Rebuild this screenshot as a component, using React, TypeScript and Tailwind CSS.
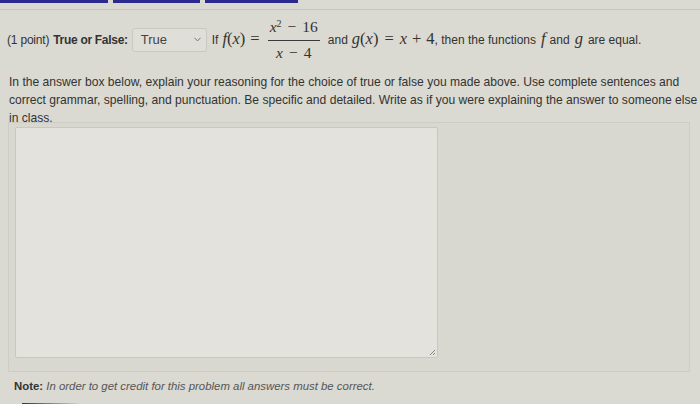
import { ChevronDown } from "lucide-react";

const serif = "font-['Liberation_Serif',serif]";

function Fraction() {
  return (
    <span className="mx-[3px] inline-flex flex-col items-center align-middle leading-none">
      <span className="px-[2px] pb-[5px] text-[15.5px]">
        <i>x</i>
        <sup className="text-[10px]">2</sup>
        <span className="mx-[6px]">−</span>16
      </span>
      <span className="h-px w-full bg-[#3a3a3a]" />
      <span className="px-[2px] pt-[4px] text-[15.5px]">
        <i>x</i>
        <span className="mx-[6px]">−</span>4
      </span>
    </span>
  );
}

export default function App() {
  return (
    <div className="flex min-h-[404px] w-[700px] flex-col overflow-hidden bg-[#dad9d2] font-['Liberation_Sans',Arial,sans-serif] text-[#333330]">
      {/* top tabs */}
      <div className="flex h-[3px] gap-[5px]">
        <div className="w-[108px] bg-[#2b2a8f]" />
        <div className="w-[87px] bg-[#2b2a8f]" />
        <div className="w-[93px] bg-[#2b2a8f]" />
      </div>
      <div className="mt-[6px] h-px bg-[#c6c5be]" />

      {/* problem line */}
      <div className="mt-[9px] flex items-center pl-[7px] text-[12px]">
        <span className="tracking-[-0.2px]">(1 point)</span>
        <b className="ml-[4px] tracking-[-0.3px]">True or False:</b>
        <div className="ml-[4px] flex h-[24px] w-[75px] items-center justify-between rounded-[3px] border border-[#c9c8c1] bg-[#dfded8] pl-[8px] pr-[3px] text-[13px] text-[#444]">
          <span>True</span>
          <ChevronDown size={11} strokeWidth={2} className="text-[#666]" />
        </div>
        <span className="ml-[5px]">If</span>
        <span className={`${serif} ml-[4px] flex items-center text-[16.5px]`}>
          <i>f</i>(<i>x</i>)<span className="mx-[5px]">=</span>
          <Fraction />
        </span>
        <span className="ml-[5px]">and</span>
        <span className={`${serif} ml-[4px] text-[16.5px]`}>
          <i>g</i>(<i>x</i>)<span className="mx-[6px]">=</span><i>x</i>
          <span className="mx-[5px]">+</span>4
        </span>
        <span>, then the functions</span>
        <i className={`${serif} ml-[5px] mr-[4px] text-[16.5px]`}>f</i>
        <span>and</span>
        <i className={`${serif} mx-[5px] text-[16.5px]`}>g</i>
        <span>are equal.</span>
      </div>

      {/* instructions */}
      <p className="mt-[13px] pl-[9px] text-[12.1px] leading-[18px]">
        In the answer box below, explain your reasoning for the choice of true or false you made above. Use complete
        sentences and correct grammar, spelling, and punctuation. Be specific and detailed. Write as if you were
        explaining the answer to someone else in class.
      </p>

      {/* answer panel */}
      <div className="ml-[8px] mt-[-5px] h-[250px] w-[682px] border border-[#cdccc5] bg-[#d8d7d0] pl-[6px] pt-[4px]">
        <div className="relative h-[231px] w-[423px] rounded-[2px] border border-[#c8c7c0] bg-[#e3e2dc]">
          <svg
            width="8"
            height="8"
            viewBox="0 0 8 8"
            className="absolute bottom-[1px] right-[1px] text-[#888]"
          >
            <path d="M7 2 L2 7 M7 5 L5 7" stroke="currentColor" strokeWidth="1" />
          </svg>
        </div>
      </div>

      {/* note */}
      <p className="mt-[6px] pl-[14px] text-[11.4px]">
        <b>Note:</b> <i className="text-[#555]">In order to get credit for this problem all answers must be correct.</i>
      </p>

      <div className="ml-[22px] mt-[8px] h-[3px] w-[60px] bg-gradient-to-r from-[#2b2a8f] to-transparent" />
    </div>
  );
}
